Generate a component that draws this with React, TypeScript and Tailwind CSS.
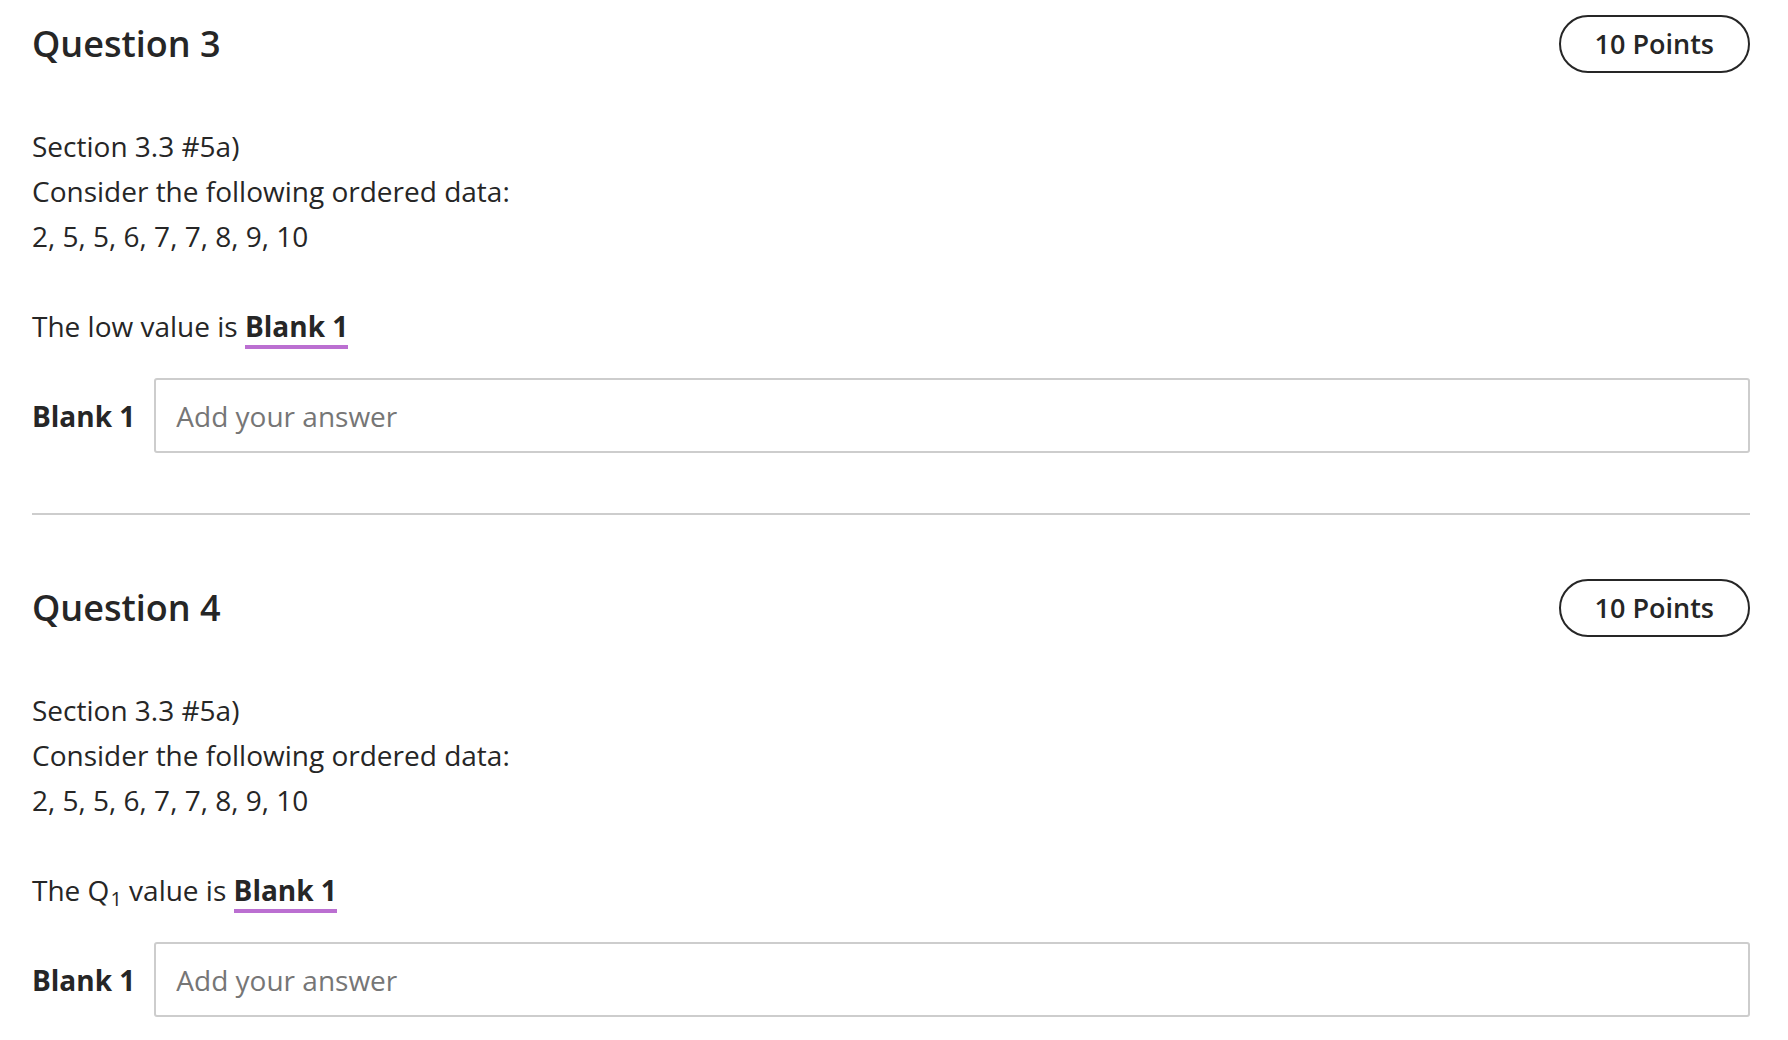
import { Fragment } from 'react';

const questions = [
  { title: 'Question 3', prompt: 'low' },
  { title: 'Question 4', prompt: 'q1' },
] as const;

function BlankTag() {
  return (
    <span className="border-b-4 border-[#bb6fd1] font-bold">Blank 1</span>
  );
}

function QuestionBlock({ title, prompt }: { title: string; prompt: 'low' | 'q1' }) {
  return (
    <section>
      <div className="flex items-center justify-between">
        <h2 className="text-[36px] font-semibold leading-[48px]">{title}</h2>
        <span className="flex h-[58px] items-center rounded-full border-2 border-[#262626] px-[34px] text-[27px] font-semibold">
          10 Points
        </span>
      </div>

      <div className="mt-[51px] text-[28px] leading-[45px]">
        <p>Section 3.3 #5a)</p>
        <p>Consider the following ordered data:</p>
        <p>2, 5, 5, 6, 7, 7, 8, 9, 10</p>
        <p className="mt-[45px]">
          {prompt === 'low' ? (
            <>The low value is </>
          ) : (
            <>
              The Q<sub className="ml-[1px] text-[20px]">1</sub> value is{' '}
            </>
          )}
          <BlankTag />
        </p>
      </div>

      <div className="mt-[29px] flex items-center gap-[19px]">
        <label className="shrink-0 text-[28px] font-bold">Blank 1</label>
        <input
          type="text"
          placeholder="Add your answer"
          className="h-[75px] flex-1 rounded-[3px] border-2 border-[#cdcdcd] bg-white px-[20px] text-[28px] text-[#262626] outline-none placeholder:text-[#767676]"
        />
      </div>
    </section>
  );
}

export default function App() {
  return (
    <div
      className="min-h-screen bg-white pl-[32px] pr-[38px] pt-[15px] text-[#262626]"
      style={{ fontFamily: '"Open Sans", "Noto Sans", sans-serif' }}
    >
      {questions.map((q, i) => (
        <Fragment key={q.title}>
          {i > 0 && <hr className="mb-[64px] mt-[60px] border-t-2 border-[#cdcdcd]" />}
          <QuestionBlock title={q.title} prompt={q.prompt} />
        </Fragment>
      ))}
    </div>
  );
}
